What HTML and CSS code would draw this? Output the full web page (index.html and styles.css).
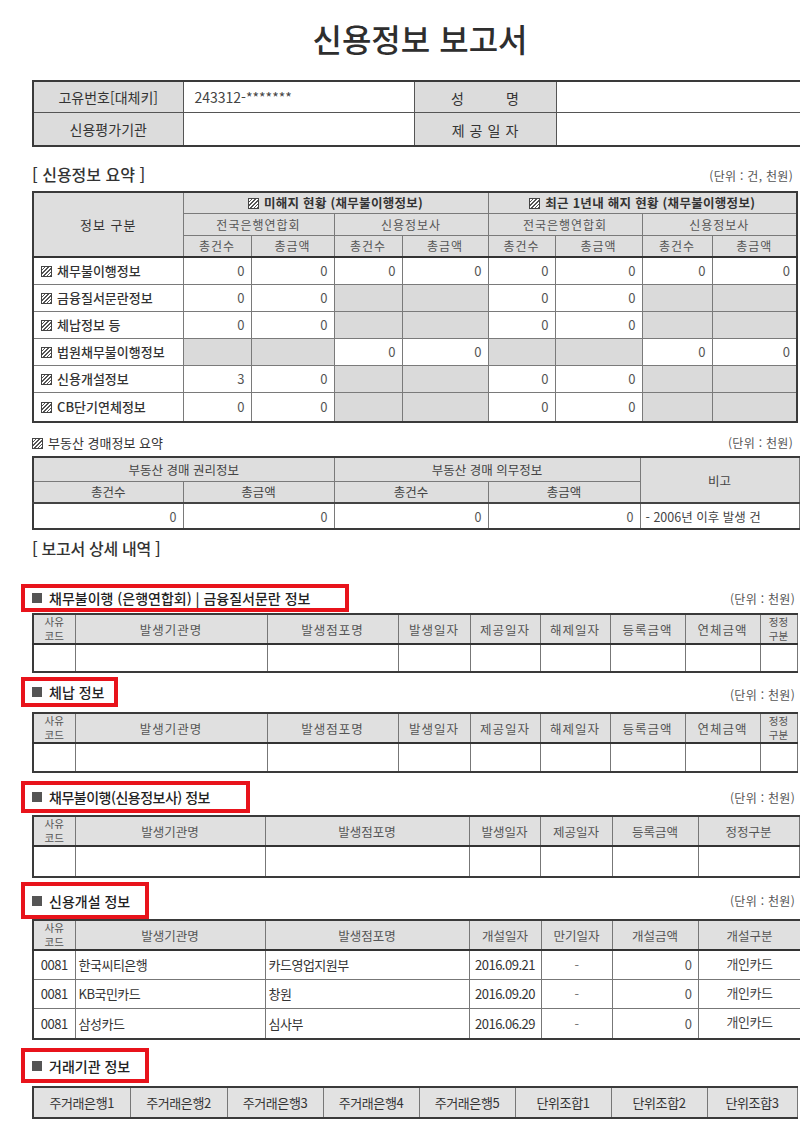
FILE: index.html
```
<!DOCTYPE html>
<html lang="ko">
<head>
<meta charset="utf-8">
<title>신용정보 보고서</title>
<link rel="stylesheet" href="styles.css">
</head>
<body>
<div class="page">
  <h1 class="doc-title">신용정보 보고서</h1>

  <table class="id-table">
    <colgroup><col class="w150"><col class="w231"><col class="w142"><col class="w245"></colgroup>
    <tr class="r1">
      <th>고유번호[대체키]</th>
      <td class="val">243312-*******</td>
      <th><span class="spread spread-wide"><span>성</span><span>명</span></span></th>
      <td class="redacted"></td>
    </tr>
    <tr class="r2">
      <th>신용평가기관</th>
      <td class="val"></td>
      <th><span class="spread spread-narrow"><span>제</span><span>공</span><span>일</span><span>자</span></span></th>
      <td class="redacted"></td>
    </tr>
  </table>

  <div class="block-head sum-head">
    <span class="bracket">[ 신용정보 요약 ]</span>
    <span class="unit">(단위 : 건, 천원)</span>
  </div>

  <table class="sum-table">
    <colgroup>
      <col class="w150"><col class="w68"><col class="w83"><col class="w68"><col class="w86">
      <col class="w67"><col class="w87"><col class="w70"><col class="w85">
    </colgroup>
    <thead>
      <tr class="h1">
        <th rowspan="3" class="grp">정보 구분</th>
        <th colspan="4" class="main"><span class="hatch"></span>미해지 현황 (채무불이행정보)</th>
        <th colspan="4" class="main"><span class="hatch"></span>최근 1년내 해지 현황 (채무불이행정보)</th>
      </tr>
      <tr class="h2">
        <th colspan="2">전국은행연합회</th><th colspan="2">신용정보사</th>
        <th colspan="2">전국은행연합회</th><th colspan="2">신용정보사</th>
      </tr>
      <tr class="h3">
        <th>총건수</th><th>총금액</th><th>총건수</th><th>총금액</th>
        <th>총건수</th><th>총금액</th><th>총건수</th><th>총금액</th>
      </tr>
    </thead>
    <tbody>
      <tr>
        <td class="lbl"><span class="hatch"></span>채무불이행정보</td>
        <td class="num">0</td><td class="num">0</td><td class="num">0</td><td class="num">0</td>
        <td class="num">0</td><td class="num">0</td><td class="num">0</td><td class="num">0</td>
      </tr>
      <tr>
        <td class="lbl"><span class="hatch"></span>금융질서문란정보</td>
        <td class="num">0</td><td class="num">0</td><td class="na"></td><td class="na"></td>
        <td class="num">0</td><td class="num">0</td><td class="na"></td><td class="na"></td>
      </tr>
      <tr>
        <td class="lbl"><span class="hatch"></span>체납정보 등</td>
        <td class="num">0</td><td class="num">0</td><td class="na"></td><td class="na"></td>
        <td class="num">0</td><td class="num">0</td><td class="na"></td><td class="na"></td>
      </tr>
      <tr>
        <td class="lbl"><span class="hatch"></span>법원채무불이행정보</td>
        <td class="na"></td><td class="na"></td><td class="num">0</td><td class="num">0</td>
        <td class="na"></td><td class="na"></td><td class="num">0</td><td class="num">0</td>
      </tr>
      <tr>
        <td class="lbl"><span class="hatch"></span>신용개설정보</td>
        <td class="num">3</td><td class="num">0</td><td class="na"></td><td class="na"></td>
        <td class="num">0</td><td class="num">0</td><td class="na"></td><td class="na"></td>
      </tr>
      <tr>
        <td class="lbl"><span class="hatch"></span>CB단기연체정보</td>
        <td class="num">0</td><td class="num">0</td><td class="na"></td><td class="na"></td>
        <td class="num">0</td><td class="num">0</td><td class="na"></td><td class="na"></td>
      </tr>
    </tbody>
  </table>

  <div class="block-head re-head">
    <span class="re-title"><span class="hatch"></span>부동산 경매정보 요약</span>
    <span class="unit">(단위 : 천원)</span>
  </div>

  <table class="re-table">
    <colgroup><col class="w150"><col class="w151"><col class="w154"><col class="w152"><col class="w159"></colgroup>
    <thead>
      <tr class="r1">
        <th colspan="2">부동산 경매 권리정보</th>
        <th colspan="2">부동산 경매 의무정보</th>
        <th rowspan="2" class="bigo">비고</th>
      </tr>
      <tr class="r2">
        <th>총건수</th><th>총금액</th><th>총건수</th><th>총금액</th>
      </tr>
    </thead>
    <tbody>
      <tr class="r3">
        <td class="num">0</td><td class="num">0</td><td class="num">0</td><td class="num">0</td>
        <td class="note">- 2006년 이후 발생 건</td>
      </tr>
    </tbody>
  </table>

  <div class="bracket detail-head">[ 보고서 상세 내역 ]</div>

  <section class="sec sec-1">
    <div class="sec-head">
      <div class="redbox"><span class="sq"></span>채무불이행 (은행연합회) | 금융질서문란 정보</div>
      <span class="unit">(단위 : 천원)</span>
    </div>
    <table class="det-table t764 spaced">
      <colgroup>
        <col class="w42"><col class="w192"><col class="w131"><col class="w72"><col class="w70">
        <col class="w70"><col class="w75"><col class="w75"><col class="w37">
      </colgroup>
      <thead>
        <tr>
          <th class="code">사유<br>코드</th><th>발생기관명</th><th>발생점포명</th><th>발생일자</th>
          <th>제공일자</th><th>해제일자</th><th>등록금액</th><th>연체금액</th><th class="code">정정<br>구분</th>
        </tr>
      </thead>
      <tbody>
        <tr class="empty-28"><td></td><td></td><td></td><td></td><td></td><td></td><td></td><td></td><td></td></tr>
      </tbody>
    </table>
  </section>

  <section class="sec sec-2">
    <div class="sec-head">
      <div class="redbox"><span class="sq"></span>체납 정보</div>
      <span class="unit">(단위 : 천원)</span>
    </div>
    <table class="det-table t764 spaced">
      <colgroup>
        <col class="w42"><col class="w192"><col class="w131"><col class="w72"><col class="w70">
        <col class="w70"><col class="w75"><col class="w75"><col class="w37">
      </colgroup>
      <thead>
        <tr>
          <th class="code">사유<br>코드</th><th>발생기관명</th><th>발생점포명</th><th>발생일자</th>
          <th>제공일자</th><th>해제일자</th><th>등록금액</th><th>연체금액</th><th class="code">정정<br>구분</th>
        </tr>
      </thead>
      <tbody>
        <tr class="empty-29"><td></td><td></td><td></td><td></td><td></td><td></td><td></td><td></td><td></td></tr>
      </tbody>
    </table>
  </section>

  <section class="sec sec-3">
    <div class="sec-head">
      <div class="redbox"><span class="sq"></span>채무불이행(신용정보사) 정보</div>
      <span class="unit">(단위 : 천원)</span>
    </div>
    <table class="det-table t766">
      <colgroup>
        <col class="w42"><col class="w190"><col class="w204"><col class="w71"><col class="w72">
        <col class="w86"><col class="w101">
      </colgroup>
      <thead>
        <tr>
          <th class="code">사유<br>코드</th><th>발생기관명</th><th>발생점포명</th><th>발생일자</th>
          <th>제공일자</th><th>등록금액</th><th>정정구분</th>
        </tr>
      </thead>
      <tbody>
        <tr class="empty-31"><td></td><td></td><td></td><td></td><td></td><td></td><td></td></tr>
      </tbody>
    </table>
  </section>

  <section class="sec sec-4">
    <div class="sec-head">
      <div class="redbox"><span class="sq"></span>신용개설 정보</div>
      <span class="unit">(단위 : 천원)</span>
    </div>
    <table class="det-table t768 rows">
      <colgroup>
        <col class="w42"><col class="w190"><col class="w204"><col class="w72"><col class="w71">
        <col class="w86"><col class="w103">
      </colgroup>
      <thead>
        <tr>
          <th class="code">사유<br>코드</th><th>발생기관명</th><th>발생점포명</th><th>개설일자</th>
          <th>만기일자</th><th>개설금액</th><th>개설구분</th>
        </tr>
      </thead>
      <tbody>
        <tr>
          <td class="c">0081</td><td class="l">한국씨티은행</td><td class="l">카드영업지원부</td>
          <td class="c">2016.09.21</td><td class="c dash">-</td><td class="r">0</td><td class="kind">개인카드</td>
        </tr>
        <tr>
          <td class="c">0081</td><td class="l">KB국민카드</td><td class="l">창원</td>
          <td class="c">2016.09.20</td><td class="c dash">-</td><td class="r">0</td><td class="kind">개인카드</td>
        </tr>
        <tr class="last">
          <td class="c">0081</td><td class="l">삼성카드</td><td class="l">심사부</td>
          <td class="c">2016.06.29</td><td class="c dash">-</td><td class="r">0</td><td class="kind">개인카드</td>
        </tr>
      </tbody>
    </table>
  </section>

  <section class="sec sec-5">
    <div class="sec-head">
      <div class="redbox"><span class="sq"></span>거래기관 정보</div>
    </div>
    <table class="det-table t764 banks">
      <colgroup>
        <col class="w97"><col class="w97"><col class="w96"><col class="w96"><col class="w96">
        <col class="w96"><col class="w96"><col class="w90">
      </colgroup>
      <tbody>
        <tr>
          <td>주거래은행1</td><td>주거래은행2</td><td>주거래은행3</td><td>주거래은행4</td>
          <td>주거래은행5</td><td>단위조합1</td><td>단위조합2</td><td>단위조합3</td>
        </tr>
      </tbody>
    </table>
  </section>
</div>
</body>
</html>
```

FILE: styles.css
```
* { box-sizing: border-box; }
html, body { margin: 0; padding: 0; background: #fff; }
body {
  width: 800px;
  height: 1138px;
  overflow: hidden;
  font-family: "Noto Sans CJK KR", "Noto Sans", sans-serif;
  color: #333;
}
.page { padding-left: 32px; width: 800px; }

.doc-title {
  margin: 0 0 22px;
  padding: 18px 0 0 8px;
  font-size: 32px;
  line-height: 40px;
  font-weight: 500;
  letter-spacing: 0;
  text-align: center;
  color: #2e2e2e;
}

/* generic table */
table { border-collapse: collapse; table-layout: fixed; }
th, td { padding: 0; overflow: hidden; white-space: nowrap; }

/* column widths */
.w37 { width: 37px; } .w42 { width: 42px; } .w67 { width: 67px; } .w68 { width: 68px; }
.w70 { width: 70px; } .w71 { width: 71px; } .w72 { width: 72px; } .w75 { width: 75px; }
.w83 { width: 83px; } .w85 { width: 85px; } .w86 { width: 86px; } .w87 { width: 87px; }
.w90 { width: 90px; } .w96 { width: 96px; } .w97 { width: 97px; } .w101 { width: 101px; }
.w103 { width: 103px; } .w131 { width: 131px; } .w142 { width: 142px; } .w150 { width: 150px; }
.w151 { width: 151px; } .w152 { width: 152px; } .w154 { width: 154px; } .w159 { width: 159px; }
.w190 { width: 190px; } .w192 { width: 192px; } .w204 { width: 204px; } .w231 { width: 231px; }
.w245 { width: 245px; }

/* ID table */
.id-table {
  width: 768px;
  border-top: 2px solid #3a3a3a;
  border-bottom: 2px solid #3a3a3a;
  border-left: 2px solid #3a3a3a;
}
.id-table th, .id-table td { border: 1px solid #555; font-size: 14px; }
.id-table th { background: #dcdcdc; font-weight: 400; text-align: center; color: #333; }
.id-table .r1 { height: 31px; }
.id-table .r2 { height: 34px; }
.id-table .val { padding-left: 11px; color: #444; }
.id-table .redacted { border-right: none; }
.spread { display: inline-flex; vertical-align: middle; }
.spread-wide { gap: 42px; }
.spread-narrow { gap: 5px; }

/* block headings */
.block-head {
  display: flex;
  justify-content: space-between;
  align-items: flex-end;
  padding-right: 7px;
}
.sum-head { margin-top: 17px; height: 20px; margin-bottom: 7px; }
.bracket { font-size: 16px; line-height: 20px; font-weight: 500; color: #333; }
.unit { font-size: 12px; line-height: 16px; color: #555; letter-spacing: 0.3px; }

.hatch {
  display: inline-block;
  width: 11px;
  height: 11px;
  border: 1px solid #444;
  background: repeating-linear-gradient(135deg, #fff 0 1.6px, #555 1.6px 2.6px);
  vertical-align: -1px;
  margin-right: 5px;
}

/* summary table */
.sum-table { width: 764px; border: 2px solid #3a3a3a; }
.sum-table th, .sum-table td { border: 1px solid #7a7a7a; }
.sum-table thead th {
  background: #dedede;
  font-weight: 400;
  color: #555;
  font-size: 12px;
  letter-spacing: 1px;
  text-align: center;
}
.sum-table .h1 th.main { font-weight: 700; color: #333; font-size: 12.5px; letter-spacing: 0.3px; }
.sum-table .grp { font-size: 13px; color: #333; letter-spacing: 1px; border-bottom: 2px solid #333; }
.sum-table .h3 th { border-bottom: 2px solid #333; }
.sum-table .h1 { height: 21px; }
.sum-table .h2 { height: 22px; }
.sum-table .h3 { height: 22px; }
.sum-table tbody tr { height: 27px; }
.sum-table tbody tr:last-child { height: 30px; }
.sum-table .lbl { padding-left: 7px; font-size: 13px; font-weight: 500; color: #333; text-align: left; }
.num { text-align: right; padding-right: 6px; font-size: 13px; color: #555; }
.na { background: #dadada; }

/* real-estate */
.re-head { margin-top: 12px; height: 16px; margin-bottom: 5px; align-items: center; }
.re-title { font-size: 13px; line-height: 16px; color: #333; }
.re-table {
  width: 766px;
  border-top: 2px solid #3a3a3a;
  border-bottom: 2px solid #3a3a3a;
  border-left: 2px solid #3a3a3a;
}
.re-table th, .re-table td { border: 1px solid #7a7a7a; font-size: 12.5px; }
.re-table th { background: #dedede; font-weight: 400; color: #444; text-align: center; }
.re-table .r1 { height: 24px; }
.re-table .r2 { height: 22px; }
.re-table .r3 { height: 26px; }
.re-table .r2 th, .re-table .bigo { border-bottom: 2px solid #444; }
.re-table .note { padding-left: 5px; color: #444; font-size: 12.5px; }

.detail-head { margin-top: 8px; letter-spacing: -0.3px; }

/* detail sections */
.sec-head {
  display: flex;
  justify-content: space-between;
  align-items: center;
  padding-right: 5px;
}
.redbox {
  display: flex;
  align-items: center;
  align-self: flex-start;
  margin-left: -11px;
  border: 4px solid #e8131b;
  padding-left: 7px;
  font-size: 14px;
  font-weight: 500;
  color: #222;
  white-space: nowrap;
}
.sq { width: 10px; height: 10px; background: #555; margin-right: 7px; flex: none; }

.sec-1 { margin-top: 26px; }
.sec-1 .sec-head { height: 29px; }
.sec-1 .redbox { width: 328px; height: 28px; }
.sec-2 { margin-top: 4px; }
.sec-2 .sec-head { height: 35px; }
.sec-2 .redbox { width: 97px; height: 30px; }
.sec-3 { margin-top: 8px; }
.sec-3 .sec-head { height: 34px; }
.sec-3 .redbox { width: 229px; height: 32px; letter-spacing: -0.5px; }
.sec-4 { margin-top: 4px; }
.sec-4 .sec-head { height: 37px; }
.sec-4 .redbox { width: 128px; height: 37px; }
.sec-5 { margin-top: 8px; }
.sec-5 .sec-head { height: 38px; }
.sec-5 .redbox { width: 128px; height: 35px; }

.t764 { width: 764px; }
.t766 { width: 766px; }
.t768 { width: 768px; }

.det-table {
  border-top: 2px solid #3a3a3a;
  border-bottom: 2px solid #3a3a3a;
  border-left: 2px solid #3a3a3a;
}
.det-table th, .det-table td { border: 1px solid #777; }
.det-table thead th {
  background: #e0e0e0;
  font-weight: 400;
  font-size: 12.5px;
  color: #555;
  text-align: center;
  height: 30px;
  border-bottom: 2px solid #333;
}
.det-table.spaced thead th { letter-spacing: 1px; }
.det-table thead th.code { font-size: 10.5px; line-height: 14px; letter-spacing: 0; }
.empty-28 { height: 28px; }
.empty-29 { height: 29px; }
.empty-31 { height: 31px; }

.rows tbody tr { height: 29px; }
.rows tbody tr.last { height: 31px; }
.rows td { font-size: 13px; color: #333; letter-spacing: -0.5px; }
.rows .c { text-align: center; }
.rows .l { text-align: left; padding-left: 3px; }
.rows .r { text-align: right; padding-right: 6px; color: #555; }
.rows .dash { color: #777; }
.rows .kind { text-align: center; vertical-align: top; padding-top: 3px; color: #444; }

.banks td {
  background: #e2e2e2;
  height: 31px;
  text-align: center;
  font-size: 13px;
  color: #333;
  letter-spacing: -0.4px;
}
```
